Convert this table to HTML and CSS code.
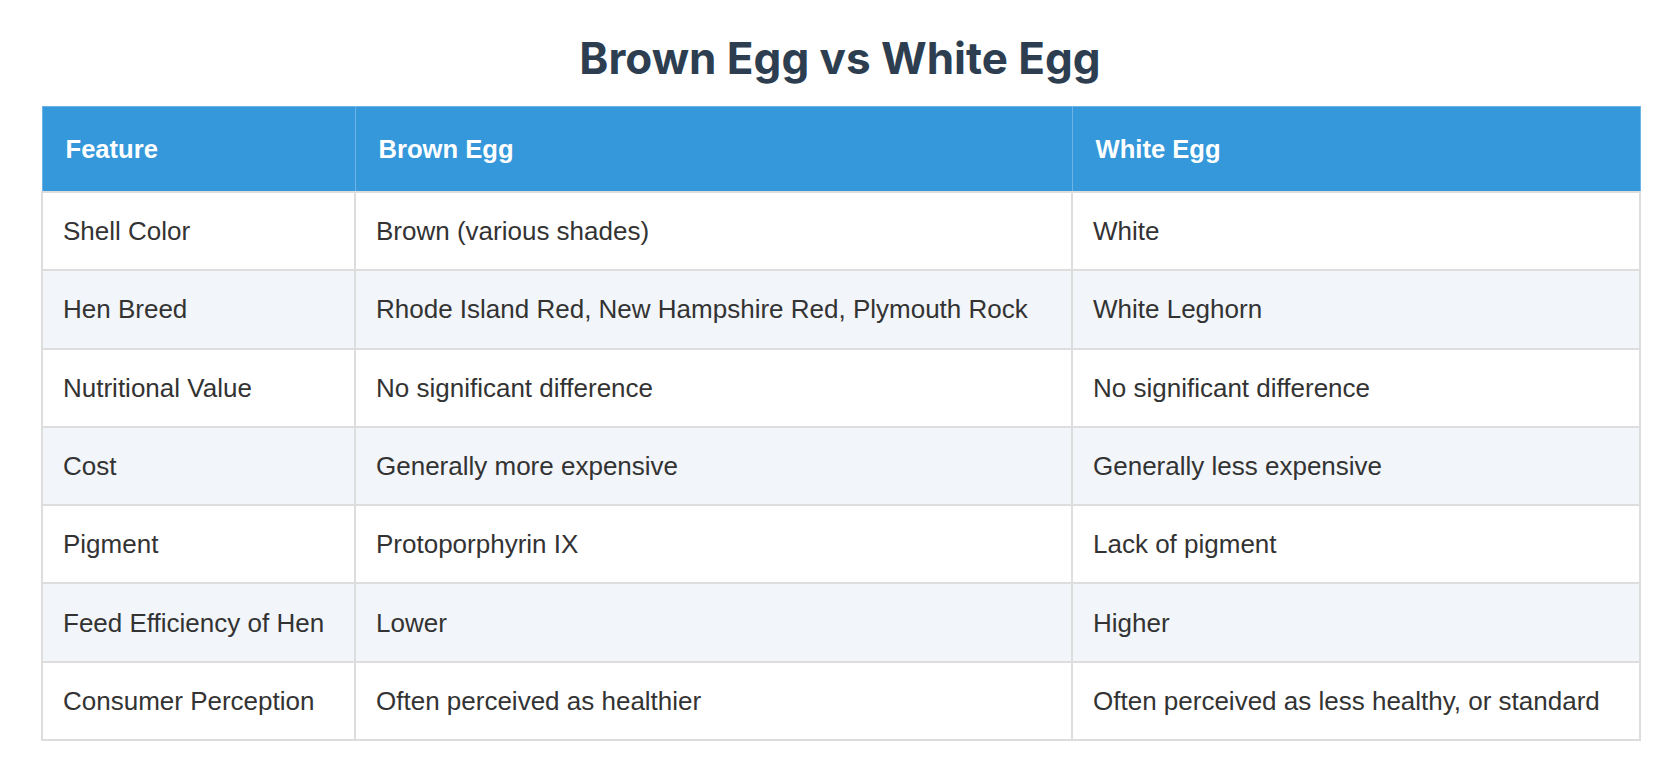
FILE: index.html
```html
<!DOCTYPE html>
<html lang="en">
<head>
<meta charset="utf-8">
<title>Brown Egg vs White Egg</title>
<link rel="stylesheet" href="styles.css">
</head>
<body>
<div class="page">
  <h1 class="title">Brown Egg vs White Egg</h1>
  <table class="compare">
    <colgroup>
      <col class="col-feature">
      <col class="col-brown">
      <col class="col-white">
    </colgroup>
    <thead>
      <tr>
        <th>Feature</th>
        <th>Brown Egg</th>
        <th>White Egg</th>
      </tr>
    </thead>
    <tbody>
      <tr><td>Shell Color</td><td>Brown (various shades)</td><td>White</td></tr>
      <tr><td>Hen Breed</td><td>Rhode Island Red, New Hampshire Red, Plymouth Rock</td><td>White Leghorn</td></tr>
      <tr><td>Nutritional Value</td><td>No significant difference</td><td>No significant difference</td></tr>
      <tr><td>Cost</td><td>Generally more expensive</td><td>Generally less expensive</td></tr>
      <tr><td>Pigment</td><td>Protoporphyrin IX</td><td>Lack of pigment</td></tr>
      <tr><td>Feed Efficiency of Hen</td><td>Lower</td><td>Higher</td></tr>
      <tr><td>Consumer Perception</td><td>Often perceived as healthier</td><td>Often perceived as less healthy, or standard</td></tr>
    </tbody>
  </table>
</div>
</body>
</html>
```

FILE: styles.css
```css
html, body {
  margin: 0;
  padding: 0;
  background: #ffffff;
}

body {
  font-family: "Liberation Sans", Arial, sans-serif;
  color: #333333;
}

.page {
  padding: 0 41px;
}

.title {
  font-family: Inter, Roboto, "Liberation Sans", sans-serif;
  font-weight: 700;
  font-size: 44px;
  line-height: 53px;
  color: #2c3e50;
  text-align: center;
  margin: 32px 0 21px;
}

.compare {
  width: 100%;
  border-collapse: collapse;
  table-layout: fixed;
}

.col-feature { width: 313px; }
.col-brown { width: 717px; }
.col-white { width: 568px; }

.compare th {
  background: #3498db;
  color: #ffffff;
  font-size: 25.6px;
  font-weight: 700;
  text-align: left;
  line-height: 30px;
  padding: 27px 23px;
  border: 1px solid #6cb4e6;
}

.compare td {
  font-size: 26px;
  line-height: 30px;
  padding: 23.15px 20px;
  border: 2px solid #dddddd;
  text-align: left;
  white-space: nowrap;
}

.compare tbody tr:nth-child(even) {
  background: #f2f5f9;
}
```
